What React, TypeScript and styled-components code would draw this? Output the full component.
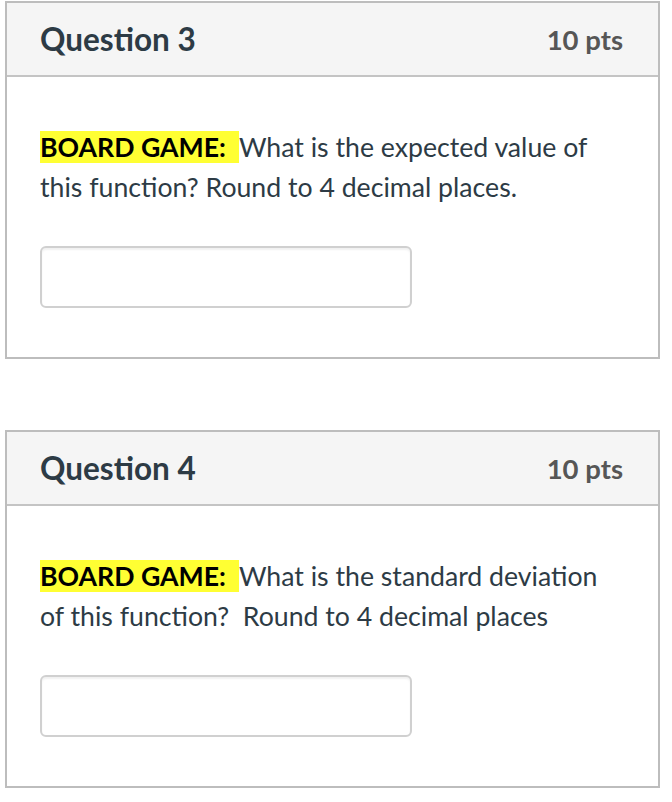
import React from "react";
import styled, { createGlobalStyle } from "styled-components";

const Global = createGlobalStyle`
  html, body { margin: 0; padding: 0; background: #ffffff; }
  body { font-family: Lato, "Open Sans", "Liberation Sans", sans-serif; }
`;

const Page = styled.div`
  display: flex;
  flex-direction: column;
  gap: 71px;
  padding: 1px 0 0 5px;
  width: 655px;
`;

const Card = styled.section`
  border: 2px solid #bdbdbd;
  background: #ffffff;
`;

const Header = styled.header`
  display: flex;
  align-items: center;
  justify-content: space-between;
  box-sizing: border-box;
  height: 74px;
  padding: 0 35px 0 33px;
  background: #f5f5f5;
  border-bottom: 2px solid #c4c4c4;
`;

const Title = styled.h2`
  margin: 0;
  font-size: 31.5px;
  font-weight: 700;
  color: #2d3b45;
`;

const Points = styled.span`
  font-size: 27.5px;
  font-weight: 700;
  color: #565656;
`;

const Body = styled.div`
  padding: 50px 35px 49px 33px;
  display: flex;
  flex-direction: column;
  gap: 39px;
`;

const Text = styled.p`
  margin: 0;
  font-size: 26.67px;
  line-height: 40px;
  color: #2d3b45;
`;

const Highlight = styled.strong`
  background: #ffff33;
  color: #000000;
  font-weight: 700;
`;

const Answer = styled.input`
  box-sizing: border-box;
  width: 372px;
  height: 62px;
  border: 2px solid #d0d0d0;
  border-radius: 6px;
  background: #ffffff;
  box-shadow: inset 0 2px 2px rgba(0, 0, 0, 0.06);
  outline: none;
`;

type Q = { n: number; pts: string; rest: string };

const questions: Q[] = [
  { n: 3, pts: "10 pts", rest: "What is the expected value of this function? Round to 4 decimal places." },
  { n: 4, pts: "10 pts", rest: "What is the standard deviation of this function?\u00a0 Round to 4 decimal places" },
];

export default function App() {
  return (
    <>
      <Global />
      <Page>
        {questions.map((q) => (
          <Card key={q.n}>
            <Header>
              <Title>Question {q.n}</Title>
              <Points>{q.pts}</Points>
            </Header>
            <Body>
              <Text>
                <Highlight>BOARD GAME:&nbsp; </Highlight>
                {q.rest}
              </Text>
              <Answer type="text" aria-label={`Answer for question ${q.n}`} />
            </Body>
          </Card>
        ))}
      </Page>
    </>
  );
}
